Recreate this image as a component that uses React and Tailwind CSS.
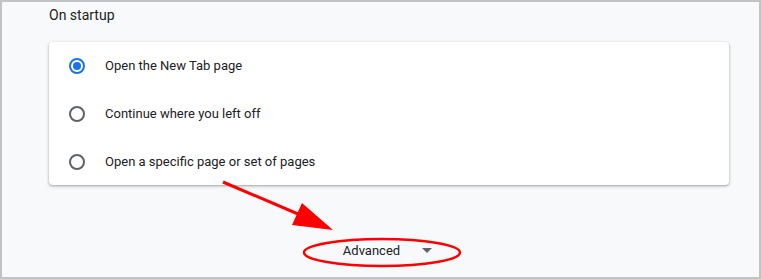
import React from "react";

function Radio({ checked }) {
  return checked ? (
    <span className="flex h-4 w-4 items-center justify-center rounded-full border-2 border-[#1a73e8]">
      <span className="h-2 w-2 rounded-full bg-[#1a73e8]" />
    </span>
  ) : (
    <span className="h-4 w-4 rounded-full border-2 border-[#5f6368]" />
  );
}

const options = [
  { label: "Open the New Tab page", checked: true },
  { label: "Continue where you left off", checked: false },
  { label: "Open a specific page or set of pages", checked: false },
];

export default function App() {
  return (
    <div
      className="relative h-[279px] w-[761px] overflow-hidden border-2 border-[#c3c3c3] bg-[#f8f9fa] text-[#202124]"
      style={{ fontFamily: "Roboto, 'Liberation Sans', sans-serif" }}
    >
      <div className="pl-[47px] pr-[30px]">
        <div className="flex h-[40px] items-start pt-[5px] text-[14px] leading-[16px] text-[#202124]">
          On startup
        </div>
        <div className="flex flex-col rounded-[4px] bg-white shadow-[0_1px_2px_rgba(60,64,67,0.3),0_1px_3px_1px_rgba(60,64,67,0.15)]">
          {options.map((o, i) => (
            <div
              key={i}
              className={`flex items-center pl-[20px] ${i === 2 ? "h-[47px]" : "h-[48px]"}`}
            >
              <Radio checked={o.checked} />
              <span className="ml-[20px] text-[13px] text-[#202124]">{o.label}</span>
            </div>
          ))}
        </div>
        <div className="mt-[56px] flex items-center justify-center pr-[3px]">
          <span className="text-[13px] text-[#202124]">Advanced</span>
          <svg width="10" height="5" viewBox="0 0 10 5" className="ml-[22px]">
            <path d="M0 0 L10 0 L5 5 Z" fill="#5f6368" />
          </svg>
        </div>
      </div>
      <svg
        className="pointer-events-none absolute left-[-2px] top-[-2px]"
        width="761"
        height="279"
        viewBox="0 0 761 279"
      >
        <line x1="223" y1="182" x2="305" y2="217" stroke="#ff0000" strokeWidth="3" />
        <polygon points="302,203 333,230 292,225" fill="#ff0000" />
        <ellipse cx="382" cy="252.5" rx="78" ry="13.5" fill="none" stroke="#ff0000" strokeWidth="2.5" />
      </svg>
    </div>
  );
}
